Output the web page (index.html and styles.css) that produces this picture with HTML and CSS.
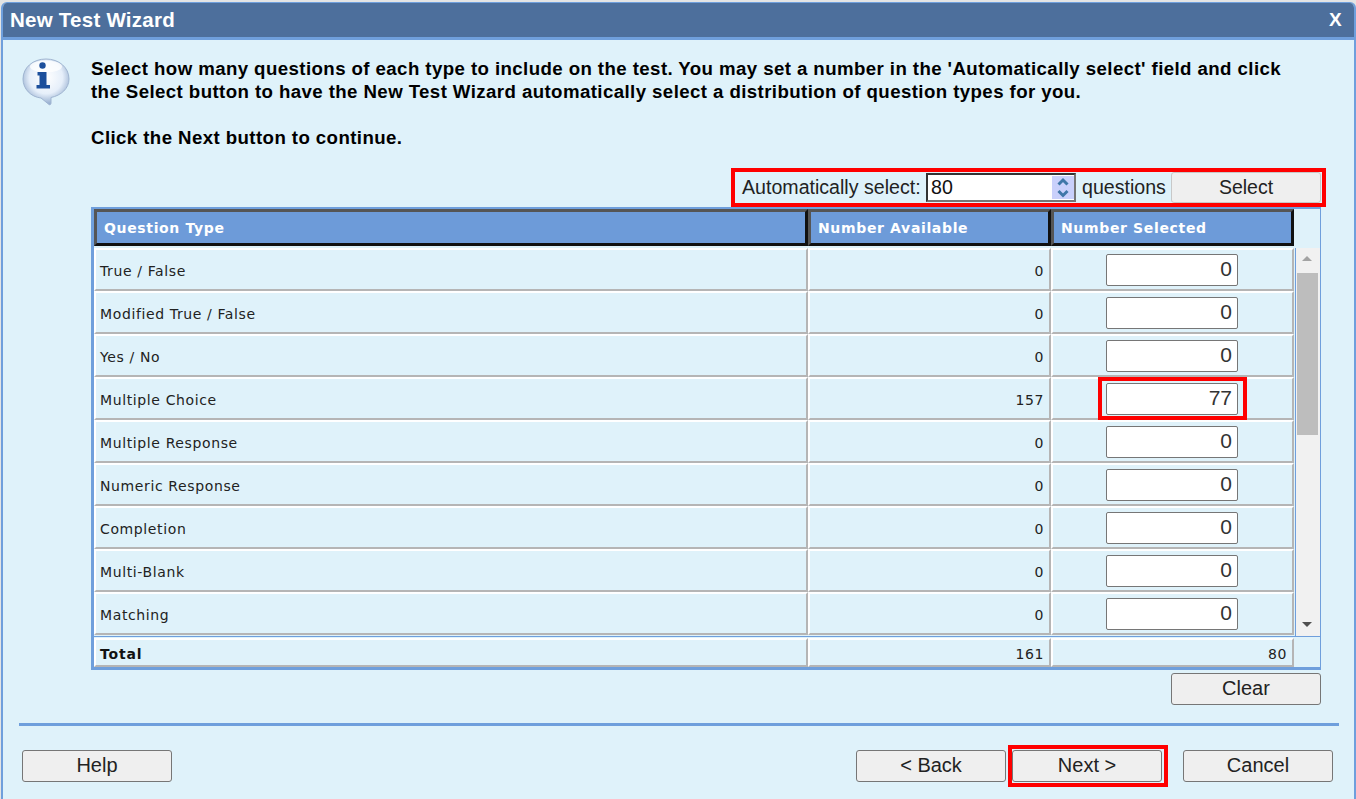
FILE: index.html
```html
<!DOCTYPE html>
<html lang="en">
<head>
<meta charset="utf-8">
<title>New Test Wizard</title>
<link rel="stylesheet" href="styles.css">
</head>
<body>
<div class="dialog">
  <header class="titlebar">
    <span class="title">New Test Wizard</span>
    <span class="close">X</span>
  </header>
  <main class="content">
    <section class="intro">
      <svg class="info-icon" viewBox="0 0 48 48" width="48" height="48" aria-hidden="true">
        <defs>
          <radialGradient id="bubble" cx="0.5" cy="0.4" r="0.6">
            <stop offset="0" stop-color="#ffffff"/>
            <stop offset="0.6" stop-color="#e6effa"/>
            <stop offset="1" stop-color="#8fa9cc"/>
          </radialGradient>
        </defs>
        <path d="M24 1C11 1 1 9.500 1 21c0 10 8 18 18 19l8 6.500c1 .8 2-.2 2-1.500V39.500C39 37.500 47 30.500 47 21 47 9.500 37 1 24 1z" fill="url(#bubble)" stroke="#9fb4d0" stroke-width="1"/>
        <ellipse cx="24" cy="8.500" rx="16" ry="6" fill="#ffffff" opacity="0.75"/>
        <circle cx="20.500" cy="7.500" r="3.200" fill="#1c4f9c"/>
        <path d="M15.500 14h9v13h3.500v3.500H14.500V27h3V17.500h-2z" fill="#1c4f9c"/>
      </svg>
      <div class="instructions">
        <p>Select how many questions of each type to include on the test. You may set a number in the 'Automatically select' field and click the Select button to have the New Test Wizard automatically select a distribution of question types for you.</p>
        <p>Click the Next button to continue.</p>
      </div>
    </section>

    <div class="auto-row">
      <div class="auto-box">
        <label class="auto-label" for="auto">Automatically select:</label>
        <div class="spin">
          <input id="auto" class="spin-input" type="text" value="80">
          <svg class="spin-arrows" viewBox="0 0 22 23" width="22" height="23" aria-hidden="true">
            <rect width="22" height="23" fill="#c9d0fb"/>
            <path d="M6.500 8.500l4.500-4.500 4.500 4.500" fill="none" stroke="#3f77a8" stroke-width="3"/>
            <path d="M6.500 15l4.500 4.500 4.500-4.500" fill="none" stroke="#3f77a8" stroke-width="3"/>
          </svg>
        </div>
        <span class="auto-suffix">questions</span>
        <button class="btn btn-select" type="button">Select</button>
      </div>
    </div>

    <div class="table-frame">
      <div class="head-row">
        <div class="hcell">Question Type</div>
        <div class="hcell">Number Available</div>
        <div class="hcell">Number Selected</div>
      </div>
      <div class="scroll-area">
        <div class="rows">
          <div class="row"><div class="cell">True / False</div><div class="cell num">0</div><div class="cell entry"><input class="qty" type="text" value="0"></div></div>
          <div class="row"><div class="cell">Modified True / False</div><div class="cell num">0</div><div class="cell entry"><input class="qty" type="text" value="0"></div></div>
          <div class="row"><div class="cell">Yes / No</div><div class="cell num">0</div><div class="cell entry"><input class="qty" type="text" value="0"></div></div>
          <div class="row"><div class="cell">Multiple Choice</div><div class="cell num">157</div><div class="cell entry"><span class="flagged"><input class="qty" type="text" value="77"></span></div></div>
          <div class="row"><div class="cell">Multiple Response</div><div class="cell num">0</div><div class="cell entry"><input class="qty" type="text" value="0"></div></div>
          <div class="row"><div class="cell">Numeric Response</div><div class="cell num">0</div><div class="cell entry"><input class="qty" type="text" value="0"></div></div>
          <div class="row"><div class="cell">Completion</div><div class="cell num">0</div><div class="cell entry"><input class="qty" type="text" value="0"></div></div>
          <div class="row"><div class="cell">Multi-Blank</div><div class="cell num">0</div><div class="cell entry"><input class="qty" type="text" value="0"></div></div>
          <div class="row"><div class="cell">Matching</div><div class="cell num">0</div><div class="cell entry"><input class="qty" type="text" value="0"></div></div>
        </div>
        <div class="scrollbar">
          <svg class="arrow" viewBox="0 0 22 18" width="22" height="18" aria-hidden="true"><path d="M6 13l5-5 5 5z" fill="#a3a3a3"/></svg>
          <div class="thumb"></div>
          <div class="track"></div>
          <svg class="arrow" viewBox="0 0 22 18" width="22" height="18" aria-hidden="true"><path d="M6 4l5 5 5-5z" fill="#505050"/></svg>
        </div>
      </div>
      <div class="total-row">
        <div class="cell total-label">Total</div>
        <div class="cell num">161</div>
        <div class="cell num">80</div>
      </div>
    </div>

    <div class="clear-row"><button class="btn" type="button">Clear</button></div>
    <hr class="divider">
    <footer class="footer">
      <button class="btn btn-help" type="button">Help</button>
      <div class="nav">
        <button class="btn" type="button">&lt; Back</button>
        <span class="next-box"><button class="btn" type="button">Next &gt;</button></span>
        <button class="btn btn-cancel" type="button">Cancel</button>
      </div>
    </footer>
  </main>
</div>
</body>
</html>
```

FILE: styles.css
```css
* { box-sizing: border-box; }
html, body { height: 100%; }
body {
  margin: 0;
  padding: 2px 0 0 1px;
  background: #e4e4e4;
  overflow: hidden;
  font-family: "Liberation Sans", Arial, sans-serif;
}
.dialog {
  height: 797px;
  border: 2px solid #6f9fdc;
  border-top-width: 1px;
  border-bottom: 0;
  border-radius: 6px 6px 0 0;
  background: #dff2fa;
  overflow: hidden;
}
.titlebar {
  height: 37px;
  padding: 0 12px 0 7px;
  display: flex;
  align-items: center;
  justify-content: space-between;
  background: #4d6f9c;
  border-bottom: 3px solid #6f9fdc;
  color: #fff;
  font-weight: 700;
  font-size: 20.500px;
  letter-spacing: 0.25px;
}
.close { font-size: 19px; }
.intro {
  display: flex;
  padding: 18px 0 0 19px;
  height: 128px;
}
.info-icon { flex: none; margin-right: 21px; }
.instructions {
  width: 1200px;
  margin-top: -1px;
  font-size: 18.670px;
  letter-spacing: 0.41px;
  font-weight: 700;
  line-height: 23px;
  color: #000;
}
.instructions p { margin: 0 0 23px; }
.auto-row {
  display: flex;
  justify-content: flex-end;
  padding-right: 28px;
  height: 39px;
}
.auto-box {
  width: 595px;
  height: 39px;
  border: 4px solid #f00;
  display: flex;
  align-items: center;
  padding-left: 7px;
  font-size: 19.600px;
  color: #222;
}
.auto-label { width: 177px; white-space: nowrap; margin-right: 7px; }
.spin {
  width: 150px;
  height: 29px;
  display: flex;
  align-items: center;
  background: #fff;
  border: 2px solid;
  border-color: #333 #767676 #767676 #333;
  margin-right: 6px;
}
.spin-input {
  flex: 1;
  min-width: 0;
  border: 0;
  outline: 0;
  padding: 0 0 0 3px;
  font: 19.600px "Liberation Sans", Arial, sans-serif;
  color: #111;
  background: transparent;
}
.spin-arrows { flex: none; }
.auto-suffix { width: 89px; white-space: nowrap; }
.btn {
  width: 150px;
  height: 32px;
  padding: 0 0 2px;
  background: #efefef;
  border: 1px solid #767676;
  border-radius: 3px;
  font: 20px "Liberation Sans", Arial, sans-serif;
  color: #222;
}
.btn-select { height: 31px; padding: 0; font-size: 19.500px; border-color: #c8c8c8; }
.table-frame {
  width: 1230px;
  height: 463px;
  margin-left: 88px;
  border: solid #6f9fdc;
  border-width: 2px 1px 3px 3px;
  font-family: "DejaVu Sans", Verdana, sans-serif;
  font-size: 14px;
  letter-spacing: 0.62px;
  color: #222;
}
.head-row, .row, .total-row {
  display: grid;
  grid-template-columns: 714px 243px 243px;
}
.head-row { height: 37px; margin-bottom: 2px; }
.hcell {
  display: flex;
  align-items: center;
  padding: 1px 0 0 7px;
  background: #6d9bd9;
  border: 3px solid;
  border-color: #555 #111 #111 #555;
  color: #fff;
  font-weight: 700;
  font-size: 14px;
  letter-spacing: 0.65px;
}
.scroll-area { display: flex; height: 389px; border-bottom: 1px solid #6f9fdc; }
.rows { width: 1200px; flex: none; }
.row { height: 43px; }
.cell {
  display: flex;
  align-items: center;
  padding: 2px 5px 0 4px;
  border: 2px solid;
  border-color: #fff #b5b5b5 #b5b5b5 #fff;
}
.num { justify-content: flex-end; }
.entry { padding: 0 0 0 53px; }
.qty {
  width: 132px;
  height: 32px;
  padding: 0 5px 2px 0;
  border: 1px solid #767676;
  border-radius: 2px;
  background: #fff;
  text-align: right;
  font: 21px "Liberation Sans", Arial, sans-serif;
  letter-spacing: 0;
  color: #333;
}
.flagged { position: relative; display: inline-flex; }
.flagged::after {
  content: "";
  position: absolute;
  inset: -6px -9px -5px -8px;
  border: 4px solid #f00;
  pointer-events: none;
}
.scrollbar {
  width: 25px;
  margin-left: 1px;
  border-left: 1px solid #6f9fdc;
  background: #f1f1f1;
  display: flex;
  flex-direction: column;
}
.arrow { flex: none; display: block; }
.thumb { width: 21px; height: 162px; margin: 7px 0 0 1px; background: #bdbdbd; }
.track { flex: 1; }
.total-row { height: 29px; margin-top: 1px; }
.total-label { font-weight: 700; letter-spacing: 0.8px; color: #111; }
.clear-row {
  display: flex;
  justify-content: flex-end;
  padding: 3px 33px 0 0;
}
.divider {
  width: 1320px;
  height: 3px;
  margin: 18px 0 0 16px;
  border: 0;
  background: #6f9fdc;
}
.footer {
  display: flex;
  justify-content: space-between;
  align-items: flex-start;
  padding: 19px 21px 0 19px;
}
.btn-help { margin-top: 5px; }
.nav { display: flex; align-items: center; }
.next-box {
  margin-left: 2px;
  padding: 1px 2px 1px 0;
  border: 4px solid #f00;
  display: flex;
}
.btn-cancel { margin-left: 15px; }
```
